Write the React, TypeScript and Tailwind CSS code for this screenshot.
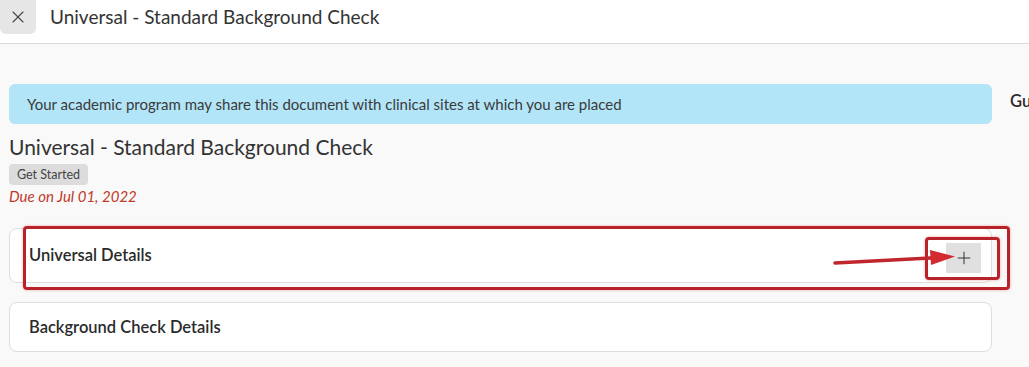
import { X, Plus } from 'lucide-react';

const font = { fontFamily: '"Source Sans Pro", Lato, "Noto Sans", sans-serif' };

function DetailCard({ title, expandable, h }: { title: string; expandable?: boolean; h: string }) {
  return (
    <div className={`flex items-center justify-between rounded-lg border border-[#dedede] bg-white pl-[19px] pr-[10px] ${h}`}>
      <span className="text-[16.5px] font-semibold text-[#2a2a2a]">{title}</span>
      {expandable && (
        <button className="mt-[4px] flex h-[30px] w-[35px] items-center justify-center bg-[#e0e0e0] text-[#333]">
          <Plus size={20} strokeWidth={1.2} />
        </button>
      )}
    </div>
  );
}

export default function App() {
  return (
    <div className="relative h-[367px] w-[1029px] overflow-hidden bg-[#f9f9f9]" style={font}>
      {/* header */}
      <div className="flex h-[44px] items-start border-b border-[#dcdcdc] bg-white">
        <button className="flex h-[34px] w-[36px] items-center justify-center rounded-b-md bg-[#e6e6e6] text-[#444]">
          <X size={20} strokeWidth={1.3} />
        </button>
        <h1 className="ml-[14px] mt-[5px] text-[19px] leading-[24px] text-[#333]">
          Universal - Standard Background Check
        </h1>
      </div>

      <div className="flex">
        {/* main column */}
        <div className="w-[992px] shrink-0 pl-[9px] pt-[40px]">
          <div className="flex h-[40px] items-center rounded-md bg-[#b3e5f8] pl-[18px] text-[15px] text-[#3a3a3a]">
            Your academic program may share this document with clinical sites at which you are placed
          </div>
          <h2 className="mt-[9px] text-[21px] leading-[28px] text-[#333]">Universal - Standard Background Check</h2>
          <span className="mt-[1px] inline-block rounded-sm bg-[#dcdcdc] px-[8px] text-[12.5px] leading-[21px] text-[#444]">
            Get Started
          </span>
          <p className="mt-[1px] text-[15px] italic leading-[20px] text-[#c0392b]">Due on Jul 01, 2022</p>

          <div className="mt-[22px] flex flex-col gap-[19px]">
            <DetailCard title="Universal Details" expandable h="h-[55px]" />
            <DetailCard title="Background Check Details" h="h-[50px]" />
          </div>
        </div>

        {/* side column */}
        <div className="shrink-0 pl-[18px] pt-[45px]">
          <span className="text-[16.5px] font-semibold text-[#2a2a2a]">Guidelines</span>
        </div>
      </div>

      {/* red annotation overlay */}
      <div className="pointer-events-none absolute left-[23px] top-[226px] h-[64px] w-[987px] rounded-sm border-[3px] border-[#b8232a] shadow-[0_0_3px_rgba(220,40,40,0.4)]" />
      <div className="pointer-events-none absolute left-[925px] top-[237px] h-[43px] w-[75px] rounded-sm border-[3px] border-[#b8232a] shadow-[0_0_3px_rgba(220,40,40,0.4)]" />
      <svg className="pointer-events-none absolute left-[830px] top-[246px]" width="130" height="24" viewBox="0 0 130 24">
        <line x1="5" y1="17" x2="110" y2="11.5" stroke="#c0262c" strokeWidth="3.5" strokeLinecap="round" />
        <polygon points="100,4 125,10.5 101,19" fill="#d42a2f" />
      </svg>
    </div>
  );
}
